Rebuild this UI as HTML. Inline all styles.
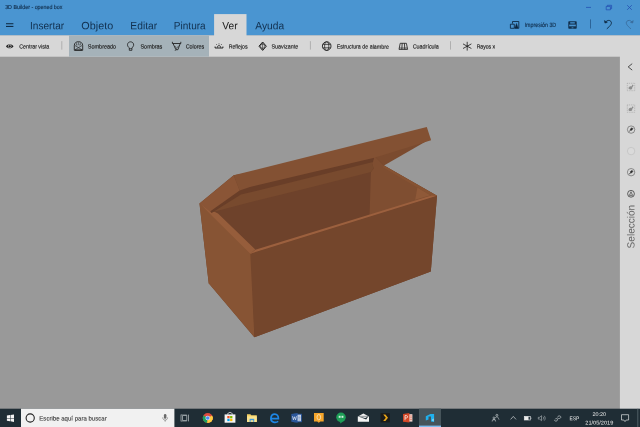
<!DOCTYPE html>
<html><head><meta charset="utf-8"><title>3D Builder - opened box</title>
<style>
html,body{margin:0;padding:0;}
body{width:640px;height:427px;overflow:hidden;position:relative;background:#999999;font-family:"Liberation Sans",sans-serif;}
svg{position:absolute;left:0;top:0;}
.tl{will-change:transform;filter:blur(0.22px);}

</style></head>
<body>
<svg width="640" height="427" viewBox="0 0 640 427">
<!-- chrome backgrounds -->
<rect x="0" y="0" width="640" height="35.4" fill="#4a95d1"/>
<rect x="0" y="35.4" width="640" height="21.3" fill="#d7d7d7"/>
<rect x="69" y="35.4" width="140" height="21.3" fill="#a5b2b9"/>
<rect x="214.1" y="14.1" width="32.4" height="22" fill="#d7d7d7"/>
<rect x="619.9" y="56" width="20.1" height="353" fill="#d7d7d7"/>
<rect x="0" y="408.7" width="640" height="18.3" fill="#1f2d35"/>
<rect x="21" y="408.7" width="153.4" height="18.3" fill="#f1f1f1"/>
<!-- box -->
<g id="box">
<!-- silhouette / inner back wall -->
<polygon points="199.5,203.4 233.7,175.3 380,150 384,165.5 437,195.8 430.8,271.5 254.4,337.2 208.7,283.3" fill="#6e422b"/>
<!-- inner right wall -->
<polygon points="374.3,156 384,165.5 437,195.8 369.6,215 370.9,172.3 373.7,168.2 372.1,163.8 373.2,160" fill="#7f4e31"/>
<!-- corner light patch -->
<polygon points="417.4,187.6 430.5,195.2 415.2,199.8" fill="#8f5938"/>
<!-- right rim -->
<polygon points="384,165.5 437,195.8 431,195.6 382.6,167" fill="#865333"/>
<!-- left face -->
<polygon points="199.5,203.4 252,252 254.4,337.2 208.7,283.3" fill="#875434"/>
<!-- front face -->
<polygon points="250.3,253.7 437,195.8 430.8,271.5 254.4,337.2" fill="#74462c"/>
<!-- left rim -->
<polygon points="199.5,203.4 206,199 212,210.6 218,213.5 255.3,249.5 250.3,253.7" fill="#965d3b"/>
<!-- front rim -->
<polygon points="250.3,253.7 437,195.8 431.5,195.4 255.3,249.7" fill="#9c603e"/>
<!-- lid: mid band -->
<polygon points="211,212.6 241,192 372.6,160 372.1,163.8 373.7,168.2 370.9,172 310,187.4 250,202.2" fill="#784a2e"/>
<!-- lid: dark stripe -->
<polygon points="210,211 239.6,189 374.3,156 373,162 241,194.6 211.5,213" fill="#693e28"/>
<!-- lid right thin triangle -->
<polygon points="431,138.5 384,165.5 374.3,156" fill="#7b4b2f"/>
<!-- lid front band -->
<polygon points="233.7,175.3 426.8,127.1 431.1,140.2 374.3,157.8 310,172.7 250,186.9 239.6,190.5" fill="#835133"/>
<!-- lid left wall -->
<polygon points="199.5,203.4 233.7,175.3 239.6,190.5 210,211.6" fill="#8a5536"/>
</g>
<!-- ===== title bar icons ===== -->
<g id="hamb" stroke="#0d2740" stroke-width="0.9" fill="none">
<path d="M6 23.7H13.4M6 26.5H13.4" stroke-width="0.95"/><path d="M6 25.1H13.4" stroke-width="0.8" opacity="0.25"/>
</g>
<g id="winctl" stroke="#2450b4" stroke-width="0.8" fill="none">
<path d="M586 7.4H591"/>
<path d="M606.2 6.4H610.4V9.8H606.2Z M607.4 6.4V5.3H611.6V8.7H610.4"/>
<path d="M627.2 5.2L631.8 9.8M631.8 5.2L627.2 9.8"/>
</g>
<g id="print3d" stroke="#0d2740" stroke-width="0.85" fill="none">
<path d="M512.5 23.6V21.5H518.8V28.3H514.6"/>
<path d="M510.4 24.2H514.3V28.3H510.4Z"/>
<path d="M514.9 28L516.5 23.4L518.1 28Z" fill="#0d2740" stroke-width="0.4"/>
</g>
<g id="save">
<rect x="568.3" y="21.2" width="8.4" height="7.5" rx="0.7" fill="#12304d"/>
<rect x="570.2" y="22.1" width="4.6" height="1.5" fill="#3f86c0"/>
<rect x="569.2" y="24.6" width="6.6" height="1.7" fill="#4a95d1"/>
<rect x="571.6" y="27.3" width="1.8" height="1" fill="#4a95d1" opacity="0.8"/>
</g>
<path d="M590.5 19.4V28.5" stroke="#1f4f80" stroke-width="0.7"/>
<g id="undo" stroke="#0d2740" stroke-width="0.9" fill="none">
<path d="M605.6 22.2C607 20.2 609.6 19.8 610.9 21.4C612.3 23.2 610.8 25.6 606.8 28.8"/>
<path d="M604.4 20.6L604.9 23.1L607.3 22.4Z" fill="#0d2740" stroke-width="0.5"/>
</g>
<g id="redo" stroke="#3a6c9c" stroke-width="0.9" fill="none">
<path d="M632.1 22.2C630.7 20.2 628.1 19.8 626.8 21.4C625.4 23.2 626.9 25.6 630.9 28.8"/>
<path d="M633.3 20.6L632.8 23.1L630.4 22.4Z" fill="#3a6c9c" stroke-width="0.5"/>
</g>
<!-- ===== toolbar icons ===== -->
<g id="eye">
<path d="M6 46.3C7.6 43.6 11.8 43.6 13.5 46.3C11.8 49 7.6 49 6 46.3Z" fill="#1b1b1b"/>
<circle cx="9.75" cy="46.3" r="1.5" fill="none" stroke="#d8d8d8" stroke-width="0.7"/>
</g>
<g stroke="#9e9e9e" stroke-width="0.7">
<path d="M61.8 41.2V49.6M310.4 41.2V49.6M450.5 41.2V49.6"/>
</g>
<g id="sombreado" stroke="#1b1b1b" stroke-width="0.85" fill="none">
<path d="M74.3 50.3V45.6C74.3 42.8 76.3 41.7 78.5 41.7C80.7 41.7 82.7 42.8 82.7 45.6V50.3Z"/>
<path d="M74.8 49.9L82.2 45.4M82.2 49.9L74.8 45.4" stroke-width="0.6"/>
<path d="M76 44.9H81" stroke-width="0.5" stroke-dasharray="0.8 0.8"/>
<path d="M78.5 42.2V44.8M76.6 43V45.2M80.4 43V45.2" stroke-width="0.45"/>
<path d="M75 50H82" stroke-width="0.9"/>
</g>
<g id="bulb" stroke="#1b1b1b" stroke-width="0.8" fill="none">
<path d="M129.3 47.8C127.2 46.6 126.9 43.6 128.7 42.4C130 41.5 131.6 41.7 132.7 42.6C134.3 44 133.9 46.7 131.9 47.8V50.3H129.3Z"/>
<path d="M129.3 48.6H131.9" stroke-width="0.6"/>
</g>
<g id="colores" stroke="#1b1b1b" stroke-width="0.85" fill="none">
<path d="M172.4 41.8V43.5H180.8V41.8"/>
<path d="M173.1 43.6L175.9 49.7H177.9L180.2 43.6"/>
<path d="M175.9 49.7L175.1 50.7"/>
<path d="M175 46L176.5 48.5L178.7 45.7" stroke-width="0.5"/>
</g>
<g id="reflejos" stroke="#1b1b1b" fill="none">
<path d="M215.1 46.5V48H222.9V46.5" stroke-width="0.95"/>
<path d="M217.4 47.6V46.7C217.4 45.3 220.6 45.3 220.6 46.7V47.6" stroke-width="0.8"/>
<path d="M219 44.4V43.4M217 45L216.3 44.2M221 45L221.7 44.2" stroke-width="0.7"/>
</g>
<g id="suaviz" stroke="#1b1b1b" stroke-width="1" fill="none">
<path d="M262.65 42L266.3 46.2L262.65 50.4L259 46.2Z"/>
<circle cx="262.65" cy="46.2" r="2.2" stroke-width="0.6"/>
<path d="M262.65 42.6V49.8" stroke-width="0.6"/>
</g>
<g id="globe" stroke="#1b1b1b" stroke-width="0.9" fill="none">
<circle cx="326.7" cy="46.1" r="4.3"/>
<ellipse cx="326.7" cy="46.1" rx="2.1" ry="4.3" stroke-width="0.7"/>
<path d="M322.7 44.4H330.7M322.7 47.8H330.7" stroke-width="0.7"/>
</g>
<g id="grid" stroke="#1b1b1b" stroke-width="0.8" fill="none">
<path d="M400.2 43.3H406.4L407.6 49.4H399Z"/>
<path d="M402.2 43.3L401.8 49.4M404.4 43.3L404.8 49.4" />
<path d="M399.3 48H407.3" stroke-width="0.6"/>
</g>
<g id="rayos" stroke="#1b1b1b" stroke-width="0.8" fill="none">
<path d="M467.2 41.8V50.6M463 43.9L471.4 48.5M471.4 43.9L463 48.5"/>
</g>
<!-- ===== right panel icons ===== -->
<path d="M632.2 63.7L628.2 66.9L632.2 70.1" stroke="#2a2a2a" stroke-width="0.8" fill="none"/>
<g id="rp1">
<rect x="627.3" y="83.3" width="7.4" height="7.4" fill="none" stroke="#9a9a9a" stroke-width="0.6" stroke-dasharray="0.9 0.9"/>
<path d="M628.6 88.8C628.2 86.6 630.2 85.6 631.4 86.4L632.6 84.6L633.6 85.6L632.2 87.4C632.8 89.2 630.2 90.2 628.6 88.8Z" fill="#8e8e8e"/>
</g>
<g id="rp2">
<rect x="627.3" y="104.9" width="7.4" height="7.4" fill="none" stroke="#9a9a9a" stroke-width="0.6" stroke-dasharray="0.9 0.9"/>
<path d="M628.6 110.4C628.2 108.2 630.2 107.2 631.4 108L632.6 106.2L633.6 107.2L632.2 109C632.8 110.8 630.2 111.8 628.6 110.4Z" fill="#8e8e8e"/>
</g>
<g id="rp3" fill="none">
<circle cx="631.1" cy="129.6" r="3.7" stroke-width="0.6" stroke="#555"/>
<path d="M629.2 131.5L630.6 129.9L630 129.29999999999998L632 127.69999999999999L633 128.7L631.6 130.5L631 130.1Z" fill="#2a2a2a" stroke="#2a2a2a" stroke-width="0.4"/>
</g>
<circle cx="631.1" cy="151.1" r="3.7" stroke="#c0c0c0" stroke-width="0.7" fill="#dadada"/>
<g id="rp5" fill="none">
<circle cx="631.1" cy="172.2" r="3.7" stroke-width="0.6" stroke="#555"/>
<path d="M629.2 174.1L630.6 172.5L630 171.89999999999998L632 170.29999999999998L633 171.29999999999998L631.6 173.1L631 172.7Z" fill="#2a2a2a" stroke="#2a2a2a" stroke-width="0.4"/>
</g>
<g id="rp6" stroke="#2a2a2a" fill="none">
<circle cx="631" cy="193.8" r="3.4" stroke-width="0.7"/>
<path d="M629.4 195.4L631 191.8L632.6 195.4Z" stroke-width="0.6"/>
</g>
<!-- ===== taskbar ===== -->
<rect x="419" y="408.7" width="22" height="18.3" fill="#46545a"/>
<rect x="419" y="425.6" width="22" height="1.4" fill="#7dbcee"/>
<g id="winlogo" fill="#f4f4f4">
<path d="M6.9 415.5L10 415V417.9H6.9Z"/>
<path d="M10.5 414.95L14 414.4V417.9H10.5Z"/>
<path d="M6.9 418.4H10V421.3L6.9 420.8Z"/>
<path d="M10.5 418.4H14V421.9L10.5 421.35Z"/>
</g>
<circle cx="30.2" cy="418" r="4.1" fill="none" stroke="#222" stroke-width="1.1"/>
<g id="mic" fill="#6a6a6a" stroke="none">
<rect x="163.9" y="414" width="2.5" height="4.8" rx="1.25"/>
<path d="M162.7 417.4C162.7 421 167.6 421 167.6 417.4" fill="none" stroke="#6a6a6a" stroke-width="0.6"/>
<path d="M165.15 420.1V421.7" stroke="#6a6a6a" stroke-width="0.6"/>
</g>
<g id="taskview" fill="none" stroke="#a9b1b5" stroke-width="0.8">
<rect x="182.6" y="415.6" width="4.2" height="4.8"/>
<path d="M181 414.6V421.4M188.5 414.6V421.4" />
<path d="M181 414.9H186.8M181 421.1H186.8" stroke-width="0.6"/>
</g>
<g id="chrome">
<circle cx="207.75" cy="418" r="5" fill="#dd4b3e"/>
<path d="M207.75 418L203.42 415.5A5 5 0 0 0 207.2 422.97Z" fill="#1aa260"/>
<path d="M207.75 418L207.2 422.97A5 5 0 0 0 212.6 416.8L207.75 418Z" fill="#ffce44"/>
<path d="M207.75 418L212.08 415.5A5 5 0 0 1 210.25 422.33Z" fill="#ffce44"/>
<circle cx="207.75" cy="418" r="2.3" fill="#f1f1f1"/>
<circle cx="207.75" cy="418" r="1.8" fill="#4c8bf5"/>
</g>
<g id="store">
<path d="M227.6 414.6C227.6 411.8 232.4 411.8 232.4 414.6" fill="none" stroke="#f4f4f4" stroke-width="0.8"/>
<rect x="224.6" y="414.4" width="10.8" height="8.3" fill="#f4f4f4"/>
<rect x="227.3" y="416" width="2.3" height="2.3" fill="#f25022"/>
<rect x="230.1" y="416" width="2.3" height="2.3" fill="#7fba00"/>
<rect x="227.3" y="418.8" width="2.3" height="2.3" fill="#00a4ef"/>
<rect x="230.1" y="418.8" width="2.3" height="2.3" fill="#ffb900"/>
</g>
<g id="explorer">
<path d="M247 414.3H250.4L251.3 415.3H256.8V421.9H247Z" fill="#f3cf63"/>
<rect x="247" y="416.3" width="9.8" height="5.6" fill="#fbe38e"/>
<rect x="249.6" y="418.8" width="4.6" height="3.1" fill="#3f9be0"/>
<rect x="250.6" y="420.2" width="2.6" height="1.7" fill="#fbe38e"/>
</g>
<g id="edge" fill="none" stroke="#1e86e4">
<path d="M271.2 418.6H278.4C278.7 412.8 271.3 412.6 270.9 418.4C270.6 422.6 275.6 423.2 278.2 421.4" stroke-width="1.7"/>
</g>
<g id="word">
<rect x="294" y="413.8" width="7.9" height="8.4" fill="#2b579a"/>
<rect x="296.8" y="414.8" width="4.2" height="6.4" fill="#dfe6f2"/>
<path d="M291.3 414L297.6 413V422.8L291.3 421.8Z" fill="#2b579a"/>
<path d="M292.5 416.2L293.4 419.8L294.5 416.8L295.6 419.8L296.5 416.2" fill="none" stroke="#fff" stroke-width="0.6"/>
<path d="M298.2 416H300.6M298.2 417.4H300.6M298.2 418.8H300.6M298.2 420.2H300.6" stroke="#2b579a" stroke-width="0.45"/>
</g>
<g id="orange">
<path d="M314 413H323.7V421.4H320.4L318.8 422.8L317.2 421.4H314Z" fill="#f5a52a"/>
<ellipse cx="318.8" cy="417.2" rx="1.8" ry="2.7" fill="none" stroke="#fbe0b2" stroke-width="0.9"/>
</g>
<g id="hangouts">
<circle cx="341" cy="417.3" r="4.8" fill="#1e9e57"/>
<path d="M340.2 421.6V423.6L343.4 421.2Z" fill="#1e9e57"/>
<rect x="338.7" y="415.8" width="1.9" height="2" fill="#d8f0e2"/>
<rect x="341.5" y="415.8" width="1.9" height="2" fill="#d8f0e2"/>
</g>
<g id="mail">
<path d="M357.8 416.4L363.4 413.6L369 416.4V421.8H357.8Z" fill="#f4f4f4"/>
<path d="M358.6 416.4L366.2 419.6L368.4 416.2L365.2 418Z" fill="#1f2d35"/>
<path d="M358.4 416.3H368.6" stroke="#1f2d35" stroke-width="0.5"/>
</g>
<g id="plex">
<rect x="380.6" y="413.2" width="9.2" height="9.2" fill="#1b1b1b"/>
<path d="M383.2 414.6H385.4L388 417.8L385.4 421H383.2L385.8 417.8Z" fill="#e9a618"/>
</g>
<g id="ppt">
<rect x="407.6" y="414.2" width="4.8" height="7.4" fill="#f3d6cf"/>
<path d="M403 413.9L409.4 413V422.6L403 421.7Z" fill="#d24726"/>
<path d="M405 420.2V415.6H406.4C408 415.6 408 418 406.4 418H405" fill="none" stroke="#fff" stroke-width="0.7"/>
<path d="M409.9 416H412M409.9 417.8H412M409.9 419.6H412" stroke="#d24726" stroke-width="0.5"/>
</g>
<g id="b3d">
<path d="M425.8 416.2L430.4 414H434.1V422.1L431 421.4V416.4H428.5V419.6L425.8 420.5Z" fill="#1fb1ee"/>
<path d="M432.4 419.2L433.6 418.6V421.2L432.4 420.9Z" fill="#a8e2fb"/>
</g>
<g id="tray" stroke="#d4d8da" fill="none" stroke-width="0.7">
<circle cx="496.9" cy="415.3" r="1" stroke-width="0.6"/>
<path d="M495.3 418.2C495.6 416.4 498.2 416.4 498.6 418.6L499 419.6" stroke-width="0.6"/>
<circle cx="493.9" cy="417.9" r="0.9" stroke-width="0.6"/>
<path d="M492.2 421.5C492.2 418.6 495.6 418.6 495.6 421.5M492.6 419.8H495.4" stroke-width="0.6"/>
<path d="M510.6 419.4L513.3 416.4L516 419.4"/>
<rect x="524.3" y="416.4" width="6" height="3.6" />
<rect x="524.3" y="416.4" width="4.2" height="3.6" fill="#ececec" stroke="none"/>
<path d="M531 417.6V418.8" />
<g stroke="#b4babd">
<path d="M538.3 417.3H539.7L541.5 415.7V420.7L539.7 419.1H538.3Z" stroke-width="0.6"/>
<path d="M543 416.8C543.8 417.6 543.8 418.8 543 419.6M544.2 415.8C545.5 417.2 545.5 419.2 544.2 420.6" stroke-width="0.6"/>
<path d="M557.4 417.4C558 415.4 561 415.4 560.8 417.4C560.6 418.6 558.4 418.8 557.6 418.2M554.6 419.8C554.2 421.4 557 421.6 557.6 420C558 418.8 556.4 418.2 555.4 418.8" stroke-width="0.8"/>
</g>
<path d="M621.5 414.7H628.6V420H626.2L625 421.6L623.8 420H621.5Z" stroke-width="0.7" stroke="#dfe2e3"/>
</g>
<path d="M637.8 408.6V427" stroke="#65727a" stroke-width="0.7"/>
</svg>


<svg class="tl" width="640" height="427" viewBox="0 0 640 427" font-family="Liberation Sans, sans-serif" text-rendering="geometricPrecision">
<text x="5.15" y="9.00" font-size="5.8" fill="#12304f" stroke="#12304f" stroke-width="0.14" textLength="57.30" lengthAdjust="spacingAndGlyphs" transform="rotate(0.05 5.15 9.00)">3D Builder - opened box</text>
<text x="29.96" y="29.20" font-size="10.6" fill="#12304f" stroke="#12304f" stroke-width="0" textLength="34.27" lengthAdjust="spacingAndGlyphs" transform="rotate(0.05 29.96 29.20)">Insertar</text>
<text x="81.36" y="29.20" font-size="10.6" fill="#12304f" stroke="#12304f" stroke-width="0" textLength="31.77" lengthAdjust="spacingAndGlyphs" transform="rotate(0.05 81.36 29.20)">Objeto</text>
<text x="130.36" y="29.20" font-size="10.6" fill="#12304f" stroke="#12304f" stroke-width="0" textLength="26.77" lengthAdjust="spacingAndGlyphs" transform="rotate(0.05 130.36 29.20)">Editar</text>
<text x="173.86" y="29.20" font-size="10.6" fill="#12304f" stroke="#12304f" stroke-width="0" textLength="31.77" lengthAdjust="spacingAndGlyphs" transform="rotate(0.05 173.86 29.20)">Pintura</text>
<text x="222.26" y="29.20" font-size="10.6" fill="#202020" stroke="#202020" stroke-width="0" textLength="15.27" lengthAdjust="spacingAndGlyphs" transform="rotate(0.05 222.26 29.20)">Ver</text>
<text x="255.36" y="29.20" font-size="10.6" fill="#12304f" stroke="#12304f" stroke-width="0" textLength="28.77" lengthAdjust="spacingAndGlyphs" transform="rotate(0.05 255.36 29.20)">Ayuda</text>
<text x="524.63" y="27.00" font-size="6.2" fill="#12304f" stroke="#12304f" stroke-width="0.14" textLength="31.54" lengthAdjust="spacingAndGlyphs" transform="rotate(0.05 524.63 27.00)">Impresión 3D</text>
<text x="19.25" y="48.60" font-size="5.9" fill="#202020" stroke="#202020" stroke-width="0.14" textLength="30.01" lengthAdjust="spacingAndGlyphs" transform="rotate(0.05 19.25 48.60)">Centrar vista</text>
<text x="87.85" y="48.60" font-size="5.9" fill="#202020" stroke="#202020" stroke-width="0.14" textLength="28.31" lengthAdjust="spacingAndGlyphs" transform="rotate(0.05 87.85 48.60)">Sombreado</text>
<text x="140.45" y="48.60" font-size="5.9" fill="#202020" stroke="#202020" stroke-width="0.14" textLength="21.91" lengthAdjust="spacingAndGlyphs" transform="rotate(0.05 140.45 48.60)">Sombras</text>
<text x="185.65" y="48.60" font-size="5.9" fill="#202020" stroke="#202020" stroke-width="0.14" textLength="18.51" lengthAdjust="spacingAndGlyphs" transform="rotate(0.05 185.65 48.60)">Colores</text>
<text x="228.65" y="48.60" font-size="5.9" fill="#202020" stroke="#202020" stroke-width="0.14" textLength="18.91" lengthAdjust="spacingAndGlyphs" transform="rotate(0.05 228.65 48.60)">Reflejos</text>
<text x="271.45" y="48.60" font-size="5.9" fill="#202020" stroke="#202020" stroke-width="0.14" textLength="26.71" lengthAdjust="spacingAndGlyphs" transform="rotate(0.05 271.45 48.60)">Suavizante</text>
<text x="336.65" y="48.60" font-size="5.9" fill="#202020" stroke="#202020" stroke-width="0.14" textLength="52.21" lengthAdjust="spacingAndGlyphs" transform="rotate(0.05 336.65 48.60)">Estructura de alambre</text>
<text x="412.65" y="48.60" font-size="5.9" fill="#202020" stroke="#202020" stroke-width="0.14" textLength="26.21" lengthAdjust="spacingAndGlyphs" transform="rotate(0.05 412.65 48.60)">Cuadrícula</text>
<text x="476.65" y="48.60" font-size="5.9" fill="#202020" stroke="#202020" stroke-width="0.14" textLength="18.51" lengthAdjust="spacingAndGlyphs" transform="rotate(0.05 476.65 48.60)">Rayos x</text>
<text x="39.33" y="420.50" font-size="6.2" fill="#444" stroke="#444" stroke-width="0.14" textLength="67.34" lengthAdjust="spacingAndGlyphs" transform="rotate(0.05 39.33 420.50)">Escribe aquí para buscar</text>
<text x="569.47" y="420.30" font-size="5.5" fill="#ececec" stroke="#ececec" stroke-width="0" textLength="9.76" lengthAdjust="spacingAndGlyphs" transform="rotate(0.05 569.47 420.30)">ESP</text>
<text x="592.48" y="416.00" font-size="5.4" fill="#ececec" stroke="#ececec" stroke-width="0" textLength="13.65" lengthAdjust="spacingAndGlyphs" transform="rotate(0.05 592.48 416.00)">20:20</text>
<text x="585.28" y="424.40" font-size="5.4" fill="#ececec" stroke="#ececec" stroke-width="0" textLength="28.05" lengthAdjust="spacingAndGlyphs" transform="rotate(0.05 585.28 424.40)">21/05/2019</text>
<text x="0" y="0" font-size="10.4" fill="#666" textLength="43.6" lengthAdjust="spacingAndGlyphs" transform="translate(634.6 248.4) rotate(-90.05)">Selección</text>
</svg>
</body></html>
